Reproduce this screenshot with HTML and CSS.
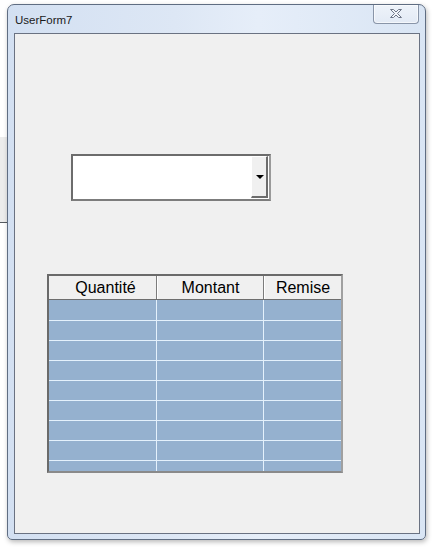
FILE: index.html
```html
<!DOCTYPE html>
<html>
<head>
<meta charset="utf-8">
<link rel="stylesheet" href="styles.css">
</head>
<body>
<div class="bgwin"></div>
<div class="window">
  <div class="titlebar">
    <span class="title">UserForm7</span>
    <div class="close">
      <svg width="14" height="11" viewBox="0 0 14 11">
        <path d="M1.5 1.5 H4.5 L7 4 L9.5 1.5 H12.5 L8.5 5.5 L12.5 9.5 H9.5 L7 7 L4.5 9.5 H1.5 L5.5 5.5 Z" fill="#f4f6fa" stroke="#6e7687" stroke-width="1" stroke-linejoin="round"/>
      </svg>
    </div>
  </div>
  <div class="client">
    <div class="combo">
      <div class="combo-text"></div>
      <div class="combo-btn"><span class="arrow"></span></div>
    </div>
    <div class="listbox">
      <div class="list-inner">
        <div class="row header">
          <div class="cell c1">Quantité</div>
          <div class="cell c2">Montant</div>
          <div class="cell c3">Remise</div>
        </div>
        <div class="row data"><div class="cell c1"></div><div class="cell c2"></div><div class="cell c3"></div></div>
        <div class="row data"><div class="cell c1"></div><div class="cell c2"></div><div class="cell c3"></div></div>
        <div class="row data"><div class="cell c1"></div><div class="cell c2"></div><div class="cell c3"></div></div>
        <div class="row data"><div class="cell c1"></div><div class="cell c2"></div><div class="cell c3"></div></div>
        <div class="row data"><div class="cell c1"></div><div class="cell c2"></div><div class="cell c3"></div></div>
        <div class="row data"><div class="cell c1"></div><div class="cell c2"></div><div class="cell c3"></div></div>
        <div class="row data"><div class="cell c1"></div><div class="cell c2"></div><div class="cell c3"></div></div>
        <div class="row data"><div class="cell c1"></div><div class="cell c2"></div><div class="cell c3"></div></div>
        <div class="row data"><div class="cell c1"></div><div class="cell c2"></div><div class="cell c3"></div></div>
      </div>
    </div>
  </div>
</div>
</body>
</html>
```
FILE: styles.css
```css
html, body {
  margin: 0;
  padding: 0;
  background: #ffffff;
  width: 437px;
  height: 553px;
  overflow: hidden;
  font-family: "Liberation Sans", Arial, sans-serif;
}
body {
  position: relative;
  padding-top: 4px;
  box-sizing: border-box;
}
.bgwin {
  position: absolute;
  left: 0;
  top: 137px;
  width: 8px;
  height: 85px;
  background: #ececec;
  border-bottom: 1px solid #555a60;
}
.window {
  position: relative;
  margin-left: 7px;
  width: 419px;
  height: 536px;
  box-sizing: border-box;
  border: 1px solid #5f6d82;
  border-radius: 7px 7px 5px 5px;
  background: linear-gradient(90deg, #d3e0f2 0%, #dde7f5 40%, #e6eef9 60%, #d9e5f4 100%);
  padding: 0 5px 5px 6px;
  display: flex;
  flex-direction: column;
  box-shadow: 1px 2px 5px rgba(0,0,0,0.28);
}
.titlebar {
  height: 28px;
  display: flex;
  align-items: flex-start;
  justify-content: space-between;
  flex: none;
}
.title {
  font-family: "Liberation Sans", Arial, sans-serif;
  font-size: 11.5px;
  color: #1a1a1a;
  margin-top: 9px;
  margin-left: 1px;
}
.close {
  width: 46px;
  height: 19px;
  box-sizing: border-box;
  border: 1px solid #8995a8;
  border-top: none;
  border-radius: 0 0 4px 4px;
  background: linear-gradient(180deg, #eef3fa 0%, #e3eaf5 100%);
  display: flex;
  align-items: center;
  justify-content: center;
  margin-right: 1px;
  box-shadow: inset 0 0 0 1px rgba(255,255,255,0.6);
}
.close svg { display: block; margin-top: -1px; }
.client {
  flex: 1;
  box-sizing: border-box;
  border: 1px solid #6a7282;
  background: #f0f0f0;
  padding: 120px 0 0 32px;
  display: flex;
  flex-direction: column;
  align-items: flex-start;
}
.combo {
  margin-left: 24px;
  width: 200px;
  height: 47px;
  box-sizing: border-box;
  border-style: solid;
  border-width: 2px;
  border-color: #6c6c6c #9a9a9a #7c7c7c #6c6c6c;
  background: #ffffff;
  display: flex;
  padding: 0 1px 1px 0;
}
.combo-text { flex: 1; }
.combo-btn {
  width: 17px;
  box-sizing: border-box;
  background: #f0f0f0;
  border-style: solid;
  border-width: 1px 2px 2px 1px;
  border-color: #ffffff #6c6c6c #6c6c6c #ffffff;
  display: flex;
  align-items: center;
  justify-content: center;
}
.arrow {
  width: 0;
  height: 0;
  border-left: 4px solid transparent;
  border-right: 4px solid transparent;
  border-top: 4px solid #000000;
  margin-left: 1px;
}
.listbox {
  margin-top: 73px;
  width: 296px;
  height: 199px;
  box-sizing: border-box;
  border-style: solid;
  border-width: 2px;
  border-color: #6a6a6a #a0a0a0 #8a8a8a #6a6a6a;
  background: #f0f0f0;
  overflow: hidden;
}
.list-inner {
  height: 100%;
  overflow: hidden;
}
.row {
  display: flex;
}
.cell { box-sizing: border-box; }
.c1 { width: 108px; }
.c2 { width: 107px; }
.c3 { flex: 1; }
.header {
  height: 24px;
  background: #f0f0f0;
  border-bottom: 1px solid #6e6e6e;
  box-sizing: border-box;
}
.header .cell {
  font-size: 16px;
  color: #000000;
  text-align: center;
  line-height: 23px;
  border-right: 1px solid #7c7c7c;
  border-left: 1px solid #ffffff;
}
.header .c1 { padding-left: 6px; border-left: none; }
.header .c3 { border-right: none; }
.data {
  height: 20px;
  box-sizing: border-box;
  background: #95b1cf;
  border-bottom: 1px solid #e4f1fc;
}
.header + .data { height: 21px; }
.data .c1, .data .c2 {
  border-right: 1px solid #e4f1fc;
}
```
